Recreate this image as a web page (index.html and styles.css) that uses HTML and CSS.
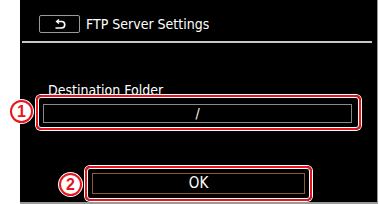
FILE: index.html
```html
<!DOCTYPE html>
<html lang="en">
<head>
    <meta charset="UTF-8">
    <title>FTP Server Settings</title>
    <link rel="stylesheet" href="styles.css">
</head>
<body>
    <div class="screen">
        <div class="header">
            <div class="back-btn">
                <svg width="12" height="11" viewBox="0 0 12 11">
                    <path d="M3 2.5 H7.5 A3.2 3.2 0 0 1 7.5 9 H1.5" fill="none" stroke="#fff" stroke-width="1.6"/>
                    <path d="M5 0.5 L2.6 2.5 L5 4.5" fill="none" stroke="#fff" stroke-width="1.4"/>
                </svg>
            </div>
            <span class="title">FTP Server Settings</span>
        </div>
        <div class="rule"></div>
        <div class="label">Destination Folder</div>
        <div class="callout field-callout">
            <span class="marker marker-1">1</span>
            <div class="field">/</div>
        </div>
        <div class="callout ok-callout">
            <span class="marker marker-2">2</span>
            <div class="ok-btn">OK</div>
        </div>
    </div>
</body>
</html>
```

FILE: styles.css
```css
body {
    margin: 0;
    background-color: white;
    font-family: "Liberation Sans Narrow", "DejaVu Sans Condensed", "Liberation Sans", sans-serif;
    color: white;
}
.screen {
    margin-left: 20px;
    width: 357px;
    height: 202px;
    background-color: black;
    border-right: 1px solid #999;
    border-bottom: 2px solid #999;
    display: flex;
    flex-direction: column;
}
.header {
    display: flex;
    align-items: center;
    height: 41px;
    padding-left: 19px;
    padding-top: 7px;
    box-sizing: border-box;
}
.back-btn {
    width: 39px;
    height: 16px;
    border: 1px solid #9a9a9a;
    border-radius: 2px;
    display: flex;
    justify-content: center;
    align-items: center;
}
.title {
    margin-left: 6px;
    font-size: 14px;
}
.rule {
    height: 2px;
    background-color: #c8c8c8;
    margin: 0 5px 0 2px;
}
.label {
    margin: 39px 0 0 28px;
    font-size: 14px;
    line-height: 17px;
}
.callout {
    position: relative;
    border: 2px solid #e8141c;
    border-radius: 5px;
    box-shadow: inset 0 0 0 1px white, 0 0 0 1px white;
}
.field-callout {
    margin: -4px 0 0 16px;
    width: 309px;
    padding: 7px 7px 5px 5px;
}
.field {
    height: 17px;
    border: 1px solid #8a8a8a;
    text-align: center;
    font-size: 14px;
    line-height: 17px;
}
.ok-callout {
    margin: 36px 0 0 65px;
    width: 213px;
    padding: 5px 5px 5px 5px;
}
.ok-btn {
    height: 19px;
    border: 1px solid #8b5a3a;
    text-align: center;
    font-size: 15px;
    line-height: 19px;
}
.marker {
    position: absolute;
    width: 19px;
    height: 19px;
    border: 2px solid #e8141c;
    border-radius: 50%;
    background-color: white;
    box-shadow: 0 0 0 1px white;
    color: #e8141c;
    font-family: "Liberation Sans", sans-serif;
    font-weight: bold;
    font-size: 16px;
    line-height: 19px;
    text-align: center;
}
.marker-1 {
    left: -28px;
    top: 3px;
}
.marker-2 {
    left: -28px;
    top: 5px;
}
```
